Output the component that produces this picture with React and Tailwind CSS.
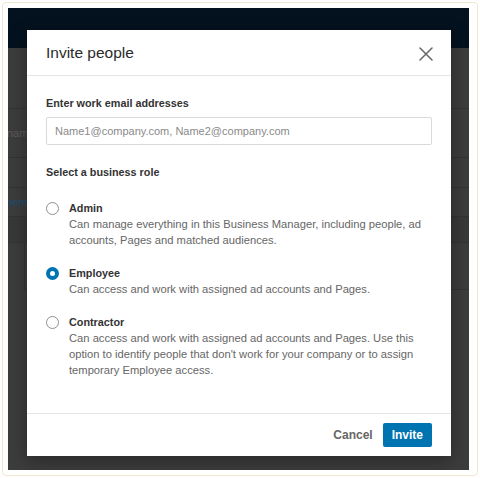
import { useState } from 'react'

const ROLES = [
  {
    id: 'admin',
    label: 'Admin',
    desc: 'Can manage everything in this Business Manager, including people, ad accounts, Pages and matched audiences.'
  },
  {
    id: 'employee',
    label: 'Employee',
    desc: 'Can access and work with assigned ad accounts and Pages.'
  },
  {
    id: 'contractor',
    label: 'Contractor',
    desc: "Can access and work with assigned ad accounts and Pages. Use this option to identify people that don't work for your company or to assign temporary Employee access."
  }
]

function Radio({ checked }) {
  return checked ? (
    <span className="mt-[2px] flex h-[13px] w-[13px] shrink-0 items-center justify-center rounded-full bg-[#0073b1]">
      <span className="h-[5px] w-[5px] rounded-full bg-white" />
    </span>
  ) : (
    <span className="mt-[2px] h-[13px] w-[13px] shrink-0 rounded-full border border-[#8f8f8f] bg-white" />
  )
}

export default function App() {
  const [role, setRole] = useState('employee')

  return (
    <div
      className="h-[478px] w-[480px] bg-white p-[2px]"
      style={{ fontFamily: '"Liberation Sans", Arial, sans-serif' }}
    >
      <div className="h-full rounded-[4px] border border-[#efe7cf] p-[5px]">
        {/* ── screenshot area ── */}
        <div className="relative flex h-[462px] w-[461px] flex-col overflow-hidden bg-[#3c3c3c]">
          <div className="h-[40px] shrink-0 bg-[#04121f]" />

          {/* background page rows (dimmed) */}
          <div className="flex flex-col text-[11px]">
            <div className="h-[61px] border-b border-[#333]" />
            <div className="flex h-[49px] items-center border-b border-[#333] text-[#5c5c5c]">
              <span className="-ml-[1px]">name</span>
            </div>
            <div className="h-[30px] border-b border-[#333]" />
            <div className="flex h-[29px] items-center border-b border-[#333] text-[#1e4d73]">
              <span className="-ml-[2px]">nent</span>
            </div>
            <div className="h-[26px] border-b border-[#333] bg-[#383838]" />
            <div className="ml-[16px] h-[47px] border-b border-l border-[#333]" />
          </div>

          {/* ── modal ── */}
          <div className="absolute left-[19px] top-[22px] flex h-[426px] w-[424px] flex-col bg-white shadow-[0_4px_16px_rgba(0,0,0,0.35)]">
            <div className="flex h-[46px] shrink-0 items-center justify-between border-b border-[#e5e5e5] pl-[19px] pr-[18px]">
              <h1 className="text-[15.5px] text-[#2b2b2b]">Invite people</h1>
              <svg width="14" height="14" viewBox="0 0 14 14" className="mt-[2px]">
                <path d="M1 1L13 13M13 1L1 13" stroke="#666" strokeWidth="1.5" strokeLinecap="round" />
              </svg>
            </div>

            <div className="flex flex-1 flex-col px-[19px] pt-[19px]">
              <p className="text-[10.8px] font-bold leading-[16px] text-[#333]">Enter work email addresses</p>
              <div className="mt-[6px] flex h-[28px] items-center rounded-[2px] border border-[#d9d9d9] px-[8px] text-[11px] text-[#8a8a8a]">
                Name1@company.com, Name2@company.com
              </div>

              <p className="mt-[19px] text-[10.8px] font-bold leading-[16px] text-[#333]">Select a business role</p>

              <div className="mt-[20px] flex flex-col gap-[17px]">
                {ROLES.map(r => (
                  <label key={r.id} className="flex gap-[10px]" onClick={() => setRole(r.id)}>
                    <Radio checked={role === r.id} />
                    <div className="flex-1">
                      <p className="text-[10.8px] font-bold leading-[16px] text-[#333]">{r.label}</p>
                      <p className="text-[11.2px] leading-[16px] text-[#666]">{r.desc}</p>
                    </div>
                  </label>
                ))}
              </div>
            </div>

            <div className="flex h-[43px] shrink-0 items-center justify-end gap-[10px] border-t border-[#e5e5e5] pr-[19px]">
              <button className="text-[12px] font-bold text-[#666]">Cancel</button>
              <button className="h-[24px] rounded-[2px] bg-[#0073b1] px-[9px] text-[12px] font-bold text-white">
                Invite
              </button>
            </div>
          </div>
        </div>
      </div>
    </div>
  )
}
